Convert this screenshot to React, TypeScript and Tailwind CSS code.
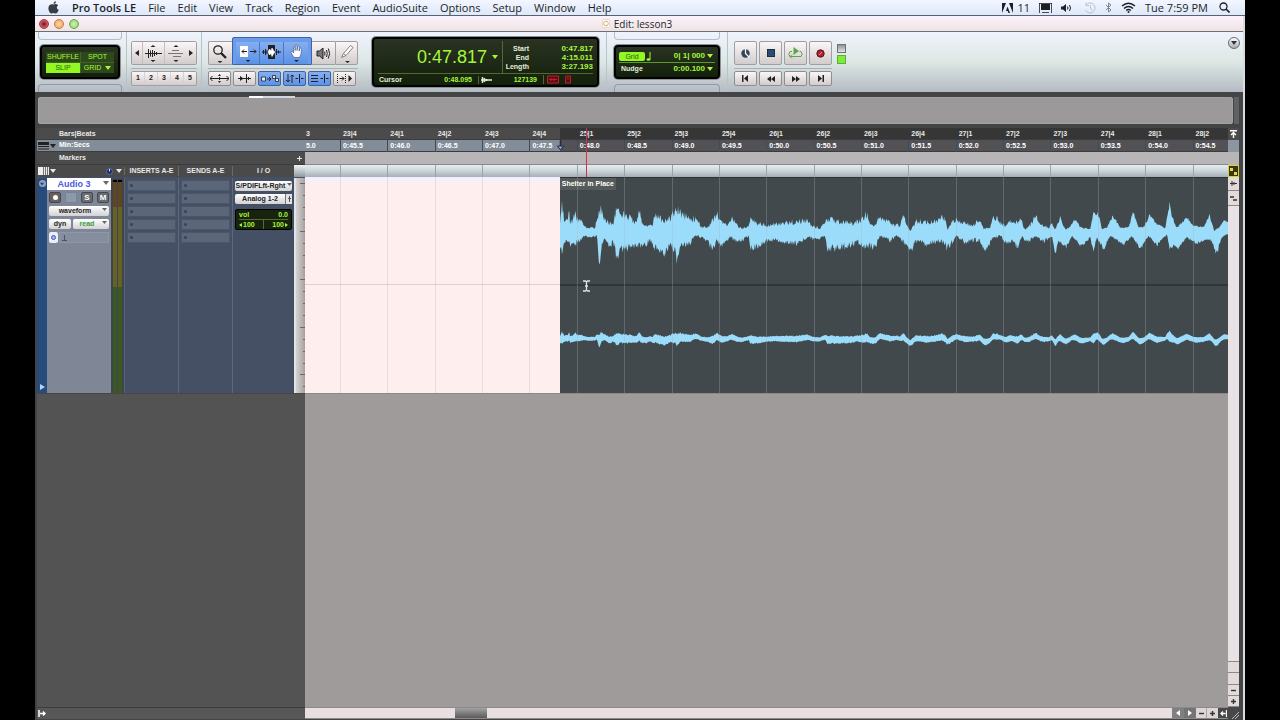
import { type ReactNode } from 'react'
import clsx from 'clsx'

type Point = [number, number]

// envelope of the clip: x and y in canvas units, three units per pixel
const UPPER: Point[] = [
    [30, 300], [36, 250], [43, 295], [55, 295], [57, 248], [60, 300], [70, 290], [76, 265], [82, 290], [95, 300],
    [110, 320], [135, 318], [150, 255], [158, 275], [175, 305], [190, 300], [197, 270], [204, 252], [215, 275],
    [235, 285], [258, 300], [268, 260], [275, 300], [290, 312], [308, 308], [315, 272], [330, 288], [350, 295],
    [365, 285], [376, 250], [385, 265], [400, 275], [425, 290], [440, 285], [455, 318], [475, 315], [490, 290],
    [503, 275], [518, 305], [530, 308], [548, 290], [560, 310], [575, 322], [595, 315], [601, 290], [620, 305],
    [650, 310], [690, 305], [720, 300], [740, 300], [770, 292], [785, 315], [810, 320], [835, 288], [870, 298],
    [910, 305], [940, 290], [950, 268], [960, 310], [975, 312], [990, 280], [1005, 295], [1030, 308], [1050, 310],
    [1060, 270], [1070, 310], [1080, 330], [1100, 295], [1125, 300], [1150, 300], [1175, 280], [1185, 290],
    [1192, 325], [1215, 290], [1235, 300], [1260, 310], [1275, 310], [1288, 285], [1300, 320], [1320, 320],
    [1330, 278], [1345, 295], [1365, 315], [1380, 295], [1392, 305], [1410, 290], [1425, 325], [1440, 310],
    [1457, 280], [1470, 305], [1495, 320], [1505, 308], [1515, 325], [1530, 290], [1545, 325], [1560, 318],
    [1575, 292], [1590, 318], [1620, 325], [1630, 275], [1645, 280], [1655, 325], [1670, 320], [1688, 285],
    [1710, 320], [1735, 318], [1750, 270], [1765, 318], [1780, 318], [1798, 285], [1820, 310], [1845, 322],
    [1858, 250], [1870, 300], [1880, 320], [1910, 290], [1930, 315], [1960, 318], [1978, 285], [1992, 330],
    [2010, 315], [2023, 295], [2035, 305],
]

const LOWER: Point[] = [
    [30, 380], [36, 405], [45, 365], [70, 378], [90, 360], [105, 345], [120, 350], [140, 345], [148, 436],
    [155, 370], [165, 360], [180, 382], [190, 365], [202, 425], [212, 390], [235, 385], [255, 375], [285, 378],
    [300, 358], [315, 390], [345, 400], [365, 375], [380, 420], [390, 380], [420, 375], [432, 345], [455, 350],
    [475, 365], [488, 392], [500, 362], [515, 375], [540, 350], [560, 362], [575, 360], [597, 345], [600, 388],
    [620, 380], [650, 362], [675, 358], [705, 365], [740, 370], [775, 350], [800, 360], [825, 345], [833, 395],
    [860, 385], [895, 378], [920, 365], [945, 380], [975, 382], [990, 345], [1020, 362], [1040, 345], [1065, 375],
    [1080, 403], [1095, 365], [1130, 375], [1160, 365], [1175, 360], [1192, 388], [1210, 360], [1220, 345],
    [1245, 370], [1270, 360], [1290, 360], [1308, 397], [1325, 355], [1350, 345], [1370, 370], [1385, 360],
    [1402, 390], [1415, 350], [1435, 365], [1455, 345], [1480, 365], [1495, 355], [1505, 345], [1516, 398],
    [1525, 360], [1548, 380], [1565, 345], [1595, 375], [1620, 350], [1630, 388], [1640, 350], [1660, 385],
    [1680, 345], [1720, 370], [1745, 345], [1770, 385], [1795, 345], [1820, 372], [1850, 340], [1858, 385],
    [1870, 370], [1882, 382], [1910, 350], [1940, 368], [1965, 355], [1985, 360], [1998, 400], [2015, 350],
    [2025, 342], [2035, 340],
]

const noise = (n: number) => {
    const v = Math.sin(n * 127.1) * 43758.5453
    return v - Math.floor(v)
}

const sample = (points: Point[], x: number) => {
    const i = Math.max(1, points.findIndex((p) => p[0] >= x))
    const [x0, y0] = points[i - 1]
    const [x1, y1] = points[i]
    return y0 + ((y1 - y0) * (x - x0)) / (x1 - x0)
}

// sway moves both edges together, which turns a thin wave into a ribbon
const wavePath = (center: number, scale: number, pad: number, sway: number) => {
    const top: string[] = []
    const bottom: string[] = []
    for (let x = 30; x <= 2034; x += 2) {
        const up = sample(UPPER, x) - 333
        const down = sample(LOWER, x) - 333
        const shift = (up + down) * sway - pad
        const ragged = x < 1500 ? 0.5 : 0.3
        const y0 = center + up * scale * (1.14 - noise(x) * ragged) + shift
        const y1 = center + down * scale * (1.14 - noise(x + 7) * ragged) + shift + pad * 2
        top.push(`${x} ${y0.toFixed(1)}`)
        bottom.unshift(`${x} ${y1.toFixed(1)}`)
    }
    return `M${top.join('L')}L${bottom.join('L')}Z`
}

const LEFT_WAVE = wavePath(333, 1, 0, 0)
const RIGHT_WAVE = wavePath(653, 0.2, 3, 0.12)

const MENUS = ['File', 'Edit', 'View', 'Track', 'Region', 'Event', 'AudioSuite', 'Options', 'Setup', 'Window', 'Help']

const BARS = [
    '3', '23|4', '24|1', '24|2', '24|3', '24|4', '25|1', '25|2', '25|3', '25|4',
    '26|1', '26|2', '26|3', '26|4', '27|1', '27|2', '27|3', '27|4', '28|1', '28|2',
]

const SECS = [
    '5.0', '0:45.5', '0:46.0', '0:46.5', '0:47.0', '0:47.5', '0:48.0', '0:48.5', '0:49.0', '0:49.5',
    '0:50.0', '0:50.5', '0:51.0', '0:51.5', '0:52.0', '0:52.5', '0:53.0', '0:53.5', '0:54.0', '0:54.5',
]

const TIME_GRID = 'grid grid-cols-[360fr_repeat(18,474fr)_345fr]'

const Icon = ({ w, h, className, children }: { w: number; h: number; className?: string; children: ReactNode }) => (
    <svg
        width={w}
        height={h}
        viewBox={`0 0 ${w} ${h}`}
        fill="none"
        stroke="currentColor"
        aria-hidden="true"
        className={clsx('shrink-0', className)}
    >
        {children}
    </svg>
)

const Caret = ({ className }: { className?: string }) => (
    <Icon w={6} h={4} className={className}>
        <path d="M0 0H6L3 4Z" fill="currentColor" stroke="none" />
    </Icon>
)

const Tool = ({ label, active, className, children }: { label: string; active?: boolean; className?: string; children: ReactNode }) => (
    <button
        type="button"
        aria-label={label}
        className={clsx(
            'flex items-center justify-center text-[#222]',
            active ? 'bg-linear-to-b from-[#86aef0] to-[#5b92e6]' : 'bg-linear-to-b from-[#fbf5f6] to-[#d3cccd]',
            className,
        )}
    >
        {children}
    </button>
)

const SmallTool = ({ label, active, children }: { label: string; active?: boolean; children: ReactNode }) => (
    <Tool
        label={label}
        active={active}
        className={clsx('h-[15px] w-[23px] rounded-xs border', active ? 'border-[#3f64a6]' : 'border-[#8f8c90]')}
    >
        {children}
    </Tool>
)

const Slots = ({ name }: { name: string }) => (
    <div className="flex w-[54px] flex-col gap-[2px] border-r border-[#5c6880] px-[2px] pt-[2px]">
        {[1, 2, 3, 4, 5].map((n) => (
            <button
                key={n}
                type="button"
                aria-label={`${name} ${n}`}
                className="flex h-[11px] items-center border border-[#4c566a] bg-[#5b6679] pl-[2px]"
            >
                <span className="size-[3px] rounded-full bg-[#3a4252]" />
            </button>
        ))}
    </div>
)

type SelectProps = { label: string; value: string; color?: string; className?: string; wrap?: string; caret?: string }

const Select = ({ label, value, color = 'text-[#222]', className, wrap, caret = 'right-[2px]' }: SelectProps) => (
    <span className={clsx('relative block', wrap)}>
        <select
            aria-label={label}
            className={clsx(
                'block h-[10px] w-full appearance-none rounded-xs bg-linear-to-b from-white to-[#d2d2d6] text-center text-[7px] leading-[10px] font-bold',
                color,
                className,
            )}
        >
            <option>{value}</option>
        </select>
        <Icon w={5} h={3} className={clsx('pointer-events-none absolute top-[2px] text-[#666]', caret)}>
            <path d="M0 0H5L2.5 3Z" fill="currentColor" stroke="none" />
        </Icon>
    </span>
)

const Lcd = ({ className, children }: { className?: string; children: ReactNode }) => (
    <div
        className={clsx(
            'rounded-sm border-2 border-black bg-linear-to-b from-[#2b3323] to-[#12200b] font-bold text-[#a6f738] ring-1 ring-[#8c9097]',
            className,
        )}
    >
        {children}
    </div>
)

const PanelEdges = ({ className, children }: { className?: string; children: ReactNode }) => (
    <div className={clsx('flex flex-col justify-between', className)}>
        <div className="h-[8px] rounded-b-sm border border-t-0 border-[#b3bec9]" />
        {children}
        <div className="h-[8px] rounded-t-sm border border-b-0 border-[#8f9aa5]" />
    </div>
)

const MenuBar = () => (
    <header className="flex h-4 shrink-0 items-center border-b border-[#59606e] bg-linear-to-b from-[#f3f6ff] to-[#dde8fa] pl-[13px] font-['Open_Sans','Noto_Sans',sans-serif] text-[11px] leading-[14px] text-[#1d1f24]">
        <Icon w={11} h={13} className="mr-[13px] text-[#3a3d45]">
            <path
                d="M5.6 3.6C6.8 2.8 8.9 2.7 10.1 4.4 8.2 5.5 8.4 8 10.7 9 10 10.9 8.7 12.6 7.6 12.5 6.6 12.3 6.3 11.9 5.5 11.9 4.6 11.9 4.2 12.5 3.4 12.5 1.9 12.5.4 9.7.4 7.3.4 4.3 2.7 2.7 5.6 3.6ZM5.6 3C5.5 1.5 6.6.3 8 .2 8.1 1.7 7 2.9 5.6 3Z"
                fill="currentColor"
                stroke="none"
            />
        </Icon>
        <nav aria-label="Menu" className="flex gap-[12px]">
            <button type="button" className="font-semibold">Pro Tools LE</button>
            {MENUS.map((m) => (
                <button key={m} type="button">{m}</button>
            ))}
        </nav>
        <div className="ml-auto flex items-center gap-[9px] pr-[15px]">
            <span className="flex items-center gap-1">
                <Icon w={11} h={10}>
                    <path d="M0 0H4L0 10ZM7 0H11V10ZM5.5 3.5L8 10H6.5L5.7 8H4Z" fill="currentColor" stroke="none" />
                </Icon>
                11
            </span>
            <Icon w={13} h={10}>
                <rect x="2.5" y="1.5" width="8" height="5" fill="currentColor" />
                <path d="M.5 0V10M12.5 0V10M0 .5H13M3 9.5H10" strokeWidth=".8" />
            </Icon>
            <Icon w={11} h={10}>
                <path d="M0 3.5H2L5 1V9L2 6.5H0Z" fill="currentColor" stroke="none" />
                <path d="M6.5 3.5Q7.5 5 6.5 6.5M8.5 2Q10.5 5 8.5 8" />
            </Icon>
            <Icon w={12} h={12} className="ml-[3px] text-[#b9c1d3]">
                <path d="M2 3A5 5 0 1 1 1.5 8M2 .5V3.5H5M6.5 3V6.5L8.5 8" />
            </Icon>
            <Icon w={7} h={11} className="text-[#7d8494]">
                <path d="M1 3L6 8 3.5 10V1L6 3 1 8" />
            </Icon>
            <Icon w={15} h={11}>
                <path d="M1 4Q7.5-1.5 14 4M3 6.5Q7.5 2.5 12 6.5M5.2 8.5Q7.5 6.5 9.8 8.5" strokeWidth="1.5" />
                <circle cx="7.5" cy="10" r="1" fill="currentColor" stroke="none" />
            </Icon>
            <span>Tue 7:59 PM</span>
            <Icon w={11} h={11} className="ml-[2px]">
                <circle cx="4.5" cy="4.5" r="3.5" strokeWidth="1.3" />
                <path d="M7 7L10.5 10.5" strokeWidth="1.6" />
            </Icon>
        </div>
    </header>
)

const TitleBar = () => (
    <div className="flex h-4 shrink-0 items-center border-b border-[#6d6f78] bg-linear-to-b from-[#faf3fb] to-[#efe3e3] pl-[4px]">
        <div className="flex w-0 flex-none gap-[5px]">
            <button type="button" aria-label="Close" className="size-[10px] shrink-0 rounded-full border border-[#a83545] bg-radial from-[#7c1020] to-[#f0848c]" />
            <button type="button" aria-label="Minimize" className="size-[10px] shrink-0 rounded-full border border-[#c57a45] bg-radial from-[#ffd9a0] to-[#f29a55]" />
            <button type="button" aria-label="Zoom" className="size-[10px] shrink-0 rounded-full border border-[#6aa552] bg-radial from-[#d3f5b4] to-[#86cc68]" />
        </div>
        <h1 className="flex flex-1 items-center justify-center gap-1 pr-[8px] font-['Open_Sans','Noto_Sans',sans-serif] text-[10px] leading-[14px] text-[#26262b]">
            <Icon w={8} h={9} className="text-[#d6ad69]">
                <path d="M.5.5H7.5V8.5H.5Z" fill="#fff" stroke="#e3dcd6" />
                <circle cx="4" cy="4.5" r="2.3" />
            </Icon>
            Edit: lesson3
        </h1>
    </div>
)

const EditModes = () => (
    <PanelEdges className="mr-[4px] ml-[3px] w-[84px]">
        <Lcd className="mx-[2px] h-[34px] p-[4px] pt-[5px] text-[7px] font-normal text-[#8fca3c]">
            <div className="grid h-full grid-cols-[34px_1fr] grid-rows-2 gap-px bg-[#44632a]">
                <button type="button" className="bg-[#2d491b]">SHUFFLE</button>
                <button type="button" className="bg-[#2d491b]">SPOT</button>
                <button type="button" className="bg-[#92f722] text-[#2d5a10]">SLIP</button>
                <button type="button" className="flex items-center justify-center gap-1 bg-[#2d491b]">
                    GRID
                    <Caret />
                </button>
            </div>
        </Lcd>
    </PanelEdges>
)

const ZoomTools = () => (
    <div className="flex flex-col border-x border-[#b8c2cb] px-[4px] pt-[9px]">
        <div className="flex h-[24px] w-[66px] overflow-hidden rounded-xs border border-[#a09ea3]">
            <Tool label="Zoom out" className="w-[10px]">
                <Icon w={4} h={6}><path d="M4 0V6L0 3Z" fill="currentColor" stroke="none" /></Icon>
            </Tool>
            <Tool label="Zoom audio" className="flex-1 border-l border-[#c4bfc2]">
                <Icon w={17} h={17}>
                    <path d="M0 8.5H17M3.5 4V13M5.5 5.5V11.5M7.5 5V12M9.5 6V11M11.5 7V10" />
                    <path d="M5.5 2L8 0 10.5 2ZM5.5 15L8 17 10.5 15Z" fill="currentColor" stroke="none" />
                </Icon>
            </Tool>
            <Tool label="Zoom MIDI" className="flex-1 border-l border-[#c4bfc2]">
                <Icon w={16} h={17} className="text-[#777]">
                    <path d="M4 5.5H11M0 8.5H9M8 8.5H15M5 11.5H13" />
                    <path d="M5.5 2L8 0 10.5 2ZM5.5 15L8 17 10.5 15Z" fill="#222" stroke="none" />
                </Icon>
            </Tool>
            <Tool label="Zoom in" className="w-[10px]">
                <Icon w={4} h={6}><path d="M0 0V6L4 3Z" fill="currentColor" stroke="none" /></Icon>
            </Tool>
        </div>
        <div className="my-[2px] h-[2px] border-b border-[#aab0b8]" />
        <div className="flex h-[15px] w-[66px] overflow-hidden rounded-xs border border-[#a09ea3]">
            {[1, 2, 3, 4, 5].map((n) => (
                <Tool key={n} label={`Zoom preset ${n}`} className="flex-1 border-r border-[#d5d0d2] text-[7px] font-bold last:border-r-0">
                    {n}
                </Tool>
            ))}
        </div>
    </div>
)

const EditTools = () => (
    <div className="flex flex-col pt-[5px] pl-[6px]">
        <div className="flex items-end">
            <Tool label="Zoomer" className="h-[24px] w-[24px] rounded-l-xs border border-r-0 border-[#a09ea3]">
                <Icon w={17} h={19}>
                    <circle cx="6" cy="6" r="4.2" strokeWidth="1.3" />
                    <path d="M9 9L14 14" strokeWidth="2.4" />
                    <path d="M5.5 17H10.5L8 19Z" fill="currentColor" stroke="none" />
                </Icon>
            </Tool>
            <div className="flex h-[28px] items-end rounded-t-xs border border-[#3f64a6] bg-[#6b9cec] px-[3px]">
                <Tool label="Trim" active className="h-[22px] w-[24px] border-r border-[#4a76c4]">
                    <Icon w={18} h={18}>
                        <rect x="1" y="2" width="8" height="11" fill="#fff" stroke="none" />
                        <path d="M3 7.5H8M5 5.5L3 7.5 5 9.5M11 7.5H17M15 5.5L17 7.5 15 9.5" />
                        <path d="M6.5 16H11.5L9 18Z" fill="currentColor" stroke="none" />
                    </Icon>
                </Tool>
                <Tool label="Selector" active className="h-[22px] w-[24px] border-r border-[#4a76c4]">
                    <Icon w={19} h={18}>
                        <rect x="6" y="1" width="7" height="14" fill="#222" stroke="none" />
                        <path d="M0 8H19M1.5 6V10M3.5 5V11M5 6V10M14.5 5V11M16.5 6.5V9.5" />
                        <path d="M6 8L7.5 5 9 7 10 4 11.5 6.5 13 8 11.5 10 10 12.5 9 9.5 7.5 11Z" fill="#fff" stroke="#fff" strokeWidth=".6" />
                    </Icon>
                </Tool>
                <Tool label="Grabber" active className="h-[22px] w-[24px]">
                    <Icon w={13} h={18}>
                        <path
                            d="M4 13.5L.8 8.4Q.8 7 2.2 7.6L3.6 9V3Q4.6 1.8 5.2 3V6.5 1.5Q6.4.4 7 1.6V6.5L7.6 2.2Q8.8 1.4 9.2 2.6V7L9.8 4Q11.2 3.4 11.4 4.8 11.6 10 9.6 13.5Z"
                            fill="#fff"
                            stroke="#44608f"
                            strokeWidth=".7"
                        />
                        <path d="M4 16H9L6.5 18Z" fill="currentColor" stroke="none" />
                    </Icon>
                </Tool>
            </div>
            <Tool label="Scrubber" className="h-[24px] w-[23px] border-y border-[#a09ea3]">
                <Icon w={15} h={13}>
                    <path d="M1 4H3.5L7 1V12L3.5 9H1Z" fill="#777" />
                    <path d="M8.8 4.5V8.5M10.5 3Q12 6.5 10.5 10M12.3 1.5Q15 6.5 12.3 11.5" />
                </Icon>
            </Tool>
            <Tool label="Pencil" className="h-[24px] w-[23px] rounded-r-xs border border-[#a09ea3]">
                <Icon w={14} h={19}>
                    <path d="M1.5 13.5L3.5 9.5 10.5 1.5 13 3.5 6 11.5ZM3.5 9.5L6 11.5" strokeWidth=".8" fill="#fff" stroke="#666" />
                    <path d="M5 17H10L7.5 19Z" fill="currentColor" stroke="none" />
                </Icon>
            </Tool>
        </div>
        <div className="my-[2px] h-[2px] border-b border-[#aab0b8]" />
        <div className="flex gap-[2px]">
            <SmallTool label="Zoom toggle">
                <Icon w={19} h={9}>
                    <path d="M0 4.5H19M2.5 2L0 4.5 2.5 7M16.5 2L19 4.5 16.5 7M9.5 3V6" />
                    <path d="M8 2L9.5 0 11 2ZM8 7L9.5 9 11 7Z" fill="currentColor" stroke="none" />
                </Icon>
            </SmallTool>
            <SmallTool label="Tab to transients">
                <Icon w={15} h={9}>
                    <path d="M1 4.5H14M9.5 0V9M11.5 3V6" />
                    <path d="M3 2L6.5 4.5 3 7Z" fill="currentColor" stroke="none" />
                </Icon>
            </SmallTool>
            <SmallTool label="Mirrored MIDI editing" active>
                <Icon w={18} h={7}>
                    <path d="M.5 2H4.5V6H.5ZM14.5 3.5H17.5V6.5H14.5ZM11.5.5H14.5V3.5H11.5Z" fill="#dfe9fb" strokeWidth=".8" />
                    <path d="M6 4H10M8 2L10 4 8 6" />
                </Icon>
            </SmallTool>
            <SmallTool label="Automation follows edit" active>
                <Icon w={18} h={9}>
                    <path d="M2 0V8M0 6L2 8 4 6M6 9V1M4.5 2.5L6 1 8 2.5M13.5 0V9M9.5 4.5H12M15 4.5H17.5" />
                </Icon>
            </SmallTool>
            <SmallTool label="Link timeline and edit selection" active>
                <Icon w={18} h={9}>
                    <path d="M0 1.5H7M0 4.5H7M0 7.5H7M13.5 0V9M9.5 4.5H12M15 4.5H17.5" />
                </Icon>
            </SmallTool>
            <SmallTool label="Insertion follows playback">
                <Icon w={15} h={9}>
                    <path d="M.5 0V9M8.5 0V9" strokeDasharray="1 1" />
                    <path d="M2.5 4.5H7M5 2.5L7 4.5 5 6.5" />
                    <path d="M11.5 1V8L15 4.5Z" fill="currentColor" stroke="none" />
                </Icon>
            </SmallTool>
        </div>
    </div>
)

const Counter = () => (
    <Lcd className="mt-[5px] ml-[14px] flex h-[50px] w-[227px] flex-col px-[4px] pt-[2px] text-[8px]">
        <div className="flex h-[32px]">
            <div className="flex flex-1 items-center justify-end gap-[5px] pr-[4px]">
                <span className="text-[18px] leading-[18px] font-normal">0:47.817</span>
                <Caret />
            </div>
            <dl className="grid w-[91px] grid-cols-[26px_1fr] content-center border-l border-[#55682f] text-right leading-[9px]">
                <dt className="text-[7px] text-[#e6eedb]">Start</dt>
                <dd>0:47.817</dd>
                <dt className="text-[7px] text-[#e6eedb]">End</dt>
                <dd>4:15.011</dd>
                <dt className="text-[7px] text-[#e6eedb]">Length</dt>
                <dd>3:27.193</dd>
            </dl>
        </div>
        <div className="flex flex-1 items-center border-t border-[#55682f] text-[7px] leading-[10px]">
            <span className="w-[60px] pl-px text-[#e6eedb]">Cursor</span>
            <span className="w-[34px] text-right">0:48.095</span>
            <Icon w={14} h={8} className="ml-[6px] text-[#e6eedb]">
                <path d="M.5 0V8" stroke="#55682f" />
                <path d="M3 4H14M4.5 1V7M6.5 2V6M8.5 3V5" strokeWidth="1.5" />
            </Icon>
            <span className="w-[45px] text-right">127139</span>
            <Icon w={30} h={9} className="ml-[6px] text-[#c01f2c]">
                <path d="M.5 0V9" stroke="#55682f" />
                <path d="M4.5 1H15.5V8H4.5ZM6 4.5H14M8 3V6M11 3V6M23 1H27.5V8H22.5V3.5ZM25 2.5V5" fill="#5a0c12" />
            </Icon>
        </div>
    </Lcd>
)

const GridNudge = () => (
    <PanelEdges className="w-[106px]">
        <Lcd className="flex h-[34px] flex-col p-[3px] text-[8px] leading-[12px]">
            <div className="flex h-[14px] items-center border-b border-[#5b9a26]">
                <button type="button" className="h-[9px] w-[26px] rounded-xs bg-[#92f722] text-[7px] leading-[9px] font-normal text-[#2d5a10]">
                    Grid
                </button>
                <Icon w={5} h={9} className="ml-px">
                    <path d="M4 0V7" />
                    <ellipse cx="2.5" cy="7.5" rx="2" ry="1.3" fill="currentColor" stroke="none" />
                </Icon>
                <span className="ml-auto">0| 1| 000</span>
                <Caret className="mx-[2px]" />
            </div>
            <div className="flex flex-1 items-center">
                <span className="pl-[2px] text-[7px] text-[#e6eedb]">Nudge</span>
                <span className="ml-auto">0:00.100</span>
                <Caret className="mx-[2px]" />
            </div>
        </Lcd>
    </PanelEdges>
)

const bigKey = 'h-[24px] w-[23px] rounded-xs border border-[#a09ea3]'

const Transport = () => (
    <div className="ml-[7px] flex gap-[5px] border-l border-[#b8c2cb] pt-[9px] pl-[6px]">
        <div className="flex flex-col">
            <div className="flex gap-[2px]">
                <Tool label="Online" className={bigKey}>
                    <Icon w={9} h={9}>
                        <circle cx="4.5" cy="4.5" r="4.2" fill="#33465a" stroke="none" />
                        <path d="M4.5 0V4.5L8 8" stroke="#fff" strokeWidth="1.2" />
                    </Icon>
                </Tool>
                <Tool label="Stop" className={bigKey}>
                    <span className="size-[8px] border border-[#14304d] bg-[#2f4d70]" />
                </Tool>
                <Tool label="Play" className={bigKey}>
                    <Icon w={17} h={12} className="text-[#5aa84b]">
                        <path d="M5 4.5H3Q.5 7.5 3 9.5H14Q16.5 7 14 4.5H12.5M5 7.5L3 9.5 5 11.5" />
                        <path d="M6.5 0V8L12 4Z" fill="currentColor" stroke="none" />
                    </Icon>
                </Tool>
                <Tool label="Record" className={bigKey}>
                    <Icon w={9} h={9}>
                        <circle cx="4.5" cy="4.5" r="3.7" fill="#b81f31" stroke="#4a1820" />
                        <path d="M3 6L6 3" stroke="#e88b95" />
                    </Icon>
                </Tool>
            </div>
            <div className="my-[2px] h-[2px] border-b border-[#aab0b8]" />
            <div className="flex gap-[2px]">
                <SmallTool label="Return to zero">
                    <Icon w={7} h={7}><path d="M0 0H1.5V7H0ZM6 0V7L2 3.5Z" fill="currentColor" stroke="none" /></Icon>
                </SmallTool>
                <SmallTool label="Rewind">
                    <Icon w={8} h={6}><path d="M4 0V6L0 3ZM8 0V6L4 3Z" fill="currentColor" stroke="none" /></Icon>
                </SmallTool>
                <SmallTool label="Fast forward">
                    <Icon w={8} h={6}><path d="M0 0V6L4 3ZM4 0V6L8 3Z" fill="currentColor" stroke="none" /></Icon>
                </SmallTool>
                <SmallTool label="Go to end">
                    <Icon w={7} h={7}><path d="M5.5 0H7V7H5.5ZM1 0V7L5 3.5Z" fill="currentColor" stroke="none" /></Icon>
                </SmallTool>
            </div>
        </div>
        <div className="flex flex-col gap-[2px] pt-[3px]">
            <span className="size-[9px] border border-[#6e7278] bg-linear-to-b from-[#8f939a] to-[#e3e3e6]" />
            <span className="size-[9px] border border-[#5fae36] bg-[#7dec3e]" />
        </div>
    </div>
)

const Toolbar = () => (
    <div className="flex h-[60px] shrink-0 bg-linear-to-b from-[#eff3fd] via-[#dde7e4] via-50% to-[#b4bbc3]">
        <EditModes />
        <ZoomTools />
        <EditTools />
        <Counter />
        <div className="mr-[7px] ml-[7px] w-px bg-[#b8c2cb]" />
        <GridNudge />
        <Transport />
        <button
            type="button"
            aria-label="Edit window options"
            className="mt-[5px] mr-[3px] ml-auto flex size-[12px] items-center justify-center rounded-full border border-[#66696e] bg-linear-to-b from-white to-[#a9acb2]"
        >
            <Caret className="text-[#333]" />
        </button>
    </div>
)

const TrackControls = () => (
    <div className="flex w-[64px] flex-col bg-[#7f8797]">
        <div className="relative h-[12px] bg-white">
            <button type="button" className="w-[54px] text-center text-[9px] leading-[12px] font-bold text-[#4a5be0]">Audio 3</button>
            <Caret className="absolute top-[3px] right-[2px] text-[#666]" />
        </div>
        <div className="flex flex-col gap-[3px] px-[2px] pt-[2px]">
            <div className="flex justify-between text-[8px] leading-[10px] font-bold text-white">
                <button type="button" aria-label="Record enable" className="flex h-[11px] w-[12px] items-center justify-center rounded-xs border border-[#44484f] bg-[#6b5d5d]">
                    <span className="size-[5px] rounded-full bg-white" />
                </button>
                <span className="h-[11px] w-[12px] border border-[#768296] bg-[#8b99ab]" />
                <button type="button" className="h-[11px] w-[12px] rounded-xs border border-[#44484f] bg-[#686c74]">S</button>
                <button type="button" className="h-[11px] w-[12px] rounded-xs border border-[#44484f] bg-[#686c74]">M</button>
            </div>
            <Select label="Track view" value="waveform" className="pr-2" />
            <div className="flex gap-[2px]">
                <button type="button" className="h-[10px] w-[22px] rounded-xs bg-linear-to-b from-white to-[#d2d2d6] text-[7px] leading-[10px] font-bold text-[#222]">
                    dyn
                </button>
                <Select label="Automation mode" value="read" wrap="flex-1" color="text-[#3c9a3c]" className="pr-2" />
            </div>
            <div className="flex gap-px">
                <button type="button" aria-label="Timebase" className="flex h-[11px] w-[9px] items-center justify-center rounded-xs bg-[#eceef8]">
                    <span className="size-[5px] rounded-full border border-[#4a55c0] bg-[#a9b0ec]" />
                </button>
                <div className="flex flex-1 items-center border border-[#8f98a8] bg-[#858e9e] pl-[2px]">
                    <Icon w={5} h={6} className="text-[#4c5361]"><path d="M2.5 0V5M0 5.5H5" /></Icon>
                </div>
            </div>
        </div>
    </div>
)

const Track = () => (
    <div className="flex h-[216px] bg-[#465064] pt-px">
        <div className="flex w-[10px] flex-col items-center justify-between bg-[#264b7c] pt-[2px] pb-[3px]">
            <button type="button" aria-label="Track options" className="flex size-[7px] items-center justify-center rounded-full bg-[#8ea2bd]">
                <Caret className="scale-75 text-[#2c4468]" />
            </button>
            <Icon w={5} h={6} className="text-[#b3d4f5]"><path d="M0 0V6L5 3Z" fill="currentColor" stroke="none" /></Icon>
        </div>
        <TrackControls />
        <div className="flex w-[13px] gap-px bg-[#414450] px-[2px] pt-[2px]">
            {['left', 'right'].map((side) => (
                <div key={side} className="flex flex-1 flex-col">
                    <div className="h-[2px] bg-black" />
                    <div className="h-[25px] bg-[#5d4620]" />
                    <div className="h-[80px] bg-[#656322]" />
                    <div className="flex-1 bg-[#3b5922]" />
                </div>
            ))}
        </div>
        <div className="w-px bg-[#58647a]" />
        <Slots name="Insert" />
        <Slots name="Send" />
        <div className="flex flex-1 flex-col gap-[3px] px-[2px] pt-[3px]">
            <Select label="Input" value="S/PDIFLft-Rght" className="pr-[6px]" caret="right-0" />
            <div className="flex">
                <button type="button" className="h-[10px] flex-1 rounded-l-xs bg-linear-to-b from-white to-[#d2d2d6] text-[7px] leading-[10px] font-bold text-[#222]">
                    Analog 1-2
                </button>
                <button type="button" aria-label="Output window" className="flex w-[7px] items-center justify-center border-l border-[#777] bg-[#e2e2e6] text-[#555]">
                    <Icon w={3} h={6}><path d="M1.5 0V6M0 2.5H3" /></Icon>
                </button>
            </div>
            <div className="mt-[2px] rounded-xs border border-black bg-[#17230f] px-[3px] text-[7px] leading-[9px] font-bold text-[#a6f738]">
                <div className="flex justify-between border-b border-[#50702c]">
                    <span>vol</span>
                    <span>0.0</span>
                </div>
                <div className="flex justify-between">
                    <span className="flex flex-1 items-center gap-px border-r border-[#50702c]">
                        <Icon w={3} h={4}><path d="M3 0V4L0 2Z" fill="currentColor" stroke="none" /></Icon>
                        100
                    </span>
                    <span className="flex flex-1 items-center justify-end gap-px">
                        100
                        <Icon w={3} h={4}><path d="M0 0V4L3 2Z" fill="currentColor" stroke="none" /></Icon>
                    </span>
                </div>
            </div>
        </div>
        <div className="flex w-[11px] flex-col items-end justify-around border-l-2 border-[#dfe6ea] bg-linear-to-r from-[#d6d2d2] to-[#a5a1a1]">
            {Array.from({ length: 18 }, (_, i) => (
                <span key={i} className={clsx('h-px bg-[#6c6868]', i % 4 === 0 ? 'w-[5px]' : 'w-[2px]')} />
            ))}
        </div>
    </div>
)

const TrackList = () => (
    <section aria-label="Tracks" className="flex w-[268px] shrink-0 flex-col text-[7px] font-bold text-[#e8e8e8]">
        <div className="h-[12px] border-b border-[#3c3c3c] bg-[#4b4b4b] pl-[22px] leading-[12px]">Bars|Beats</div>
        <div className="flex h-[12px] items-center border-b border-[#3c3c3c] bg-[#828d99] text-white">
            <Icon w={11} h={8} className="ml-px"><path d="M0 0H11V3H0ZM0 4H11V5H0ZM0 6.5H11V7.5H0Z" fill="#222" stroke="none" /></Icon>
            <Caret className="mr-[3px] ml-px text-[#222]" />
            Min:Secs
        </div>
        <div className="flex h-[13px] items-center justify-between border-b border-[#3c3c3c] bg-[#4b4b4b] pr-[3px] pl-[22px]">
            Markers
            <button type="button" aria-label="Add marker">
                <Icon w={5} h={5}><path d="M2.5 0V5M0 2.5H5" /></Icon>
            </button>
        </div>
        <div className="flex h-[12px] items-center bg-[#4a4a4a]">
            <div className="flex w-[88px] items-center border-r border-[#6a6a6a] pl-px">
                <Icon w={11} h={8}>
                    <path d="M0 0H11V8H0Z" fill="#eee" stroke="none" />
                    <path d="M5.5 0V8M7.5 0V8M9.5 0V8" stroke="#444" strokeWidth=".7" />
                </Icon>
                <Caret className="ml-px" />
                <Icon w={7} h={7} className="ml-auto text-[#5c70b8]">
                    <circle cx="3.5" cy="3.5" r="3" fill="#1f2b58" />
                    <path d="M3.5 1V3.5" stroke="#dde" />
                </Icon>
                <Caret className="mr-[2px] ml-[3px]" />
            </div>
            <div className="w-[54px] border-r border-[#6a6a6a] text-center whitespace-nowrap">INSERTS A-E</div>
            <div className="w-[54px] border-r border-[#6a6a6a] text-center whitespace-nowrap">SENDS A-E</div>
            <div className="flex-1 text-center">I / O</div>
            <div className="h-full w-[11px] bg-linear-to-b from-[#f0f4f6] to-[#8f9aa0]" />
        </div>
        <Track />
        <div className="flex-1 border-t border-[#464646] bg-[#535353]" />
        <div className="flex h-[12px] items-center border-t border-[#3c3c3c] bg-[#575757] pl-px text-white">
            <button type="button" aria-label="Show track list">
                <Icon w={8} h={7}><path d="M1 0V7M2 3.5H7M5 1.5L7 3.5 5 5.5" strokeWidth="1.5" /></Icon>
            </button>
        </div>
    </section>
)

const GridLines = ({ className }: { className: string }) => (
    <div className={clsx('pointer-events-none absolute inset-0', TIME_GRID)}>
        {BARS.map((b) => (
            <span key={b} className={clsx('border-r last:border-r-0', className)} />
        ))}
    </div>
)

const Timeline = () => (
    <section aria-label="Timeline" className="relative flex min-w-0 flex-1 flex-col text-[7px] font-bold text-[#e8e8e8]">
        <div className={clsx(TIME_GRID, 'h-[12px] border-b border-[#3c3c3c] bg-[linear-gradient(90deg,#4b4b4b_27.6%,#363636_27.6%)] leading-[12px]')}>
            {BARS.map((b, i) => (
                <span key={b} className={i ? 'pl-[2px]' : 'pl-px'}>{b}</span>
            ))}
        </div>
        <div className={clsx(TIME_GRID, 'h-[12px] border-b border-[#3c3c3c] bg-[linear-gradient(90deg,#828d99_27.6%,#515156_27.6%)] leading-[12px] text-white')}>
            {SECS.map((s, i) => (
                <span key={s} className={clsx('border-r border-[#444b52] last:border-r-0', i ? 'pl-[2px]' : 'pl-px')}>{s}</span>
            ))}
        </div>
        <div className="h-[13px] border-b border-[#84898c] bg-[#b7b5b6]" />
        <div className="relative h-[12px] bg-linear-to-b from-[#e6edf0] via-[#cbd4d9] to-[#a5aeb3]">
            <GridLines className="border-[#9aa4aa]" />
        </div>
        <div className="relative flex h-[216px]">
            <div className="w-[27.6%] bg-[linear-gradient(#f1f0ff,#feeeee_8px)]">
                <div className="mt-[107px] h-px bg-[#ddd0d0]" />
            </div>
            <div className="relative flex-1 border-t border-[#2b3134] bg-[#41494d]">
                <svg viewBox="30 171 2004 645" preserveAspectRatio="none" className="absolute inset-0 size-full" aria-label="Waveform">
                    <path d="M30 492H2034" stroke="#20272a" strokeWidth="3" />
                    <path d={LEFT_WAVE} fill="#9bdcfa" />
                    <path d={RIGHT_WAVE} fill="#9bdcfa" />
                </svg>
                <span className="relative block w-fit bg-[#545b58] px-[2px] leading-[12px] text-white">Shelter in Place</span>
            </div>
            <GridLines className="border-[#a8b4bb]/30" />
            <Icon w={7} h={12} className="absolute top-[103px] left-[30.1%] text-[#dfe3e6]">
                <path d="M0 1H2.5L3.5 2 4.5 1H7M3.5 2V10M0 11H2.5L3.5 10 4.5 11H7M2 6H5" strokeWidth="1.3" />
            </Icon>
        </div>
        <div className="flex-1 border-t border-[#8d8989] bg-[#a09b9b]" />
        <div className="flex h-[12px] border-y border-[#8d8989] bg-[#e9dfe1]">
            <div className="w-[16.3%]" />
            <div className="w-[32px] bg-linear-to-b from-[#a3a3a3] to-[#5b5b5b]" />
            <div className="ml-auto flex text-[#333]">
                <button type="button" aria-label="Scroll left" className="flex w-[12px] items-center justify-center bg-[#808080] text-white">
                    <Icon w={4} h={6}><path d="M4 0V6L0 3Z" fill="currentColor" stroke="none" /></Icon>
                </button>
                <button type="button" aria-label="Scroll right" className="flex w-[12px] items-center justify-center bg-[#747474] text-white">
                    <Icon w={4} h={6}><path d="M0 0V6L4 3Z" fill="currentColor" stroke="none" /></Icon>
                </button>
                <button type="button" aria-label="Zoom out" className="flex w-[11px] items-center justify-center border-r border-[#aaa] bg-[#ddd5d6]">
                    <Icon w={5} h={5}><path d="M0 2.5H5" strokeWidth="1.4" /></Icon>
                </button>
                <button type="button" aria-label="Zoom in" className="flex w-[11px] items-center justify-center bg-[#ddd5d6]">
                    <Icon w={5} h={5}><path d="M0 2.5H5M2.5 0V5" strokeWidth="1.4" /></Icon>
                </button>
                <button type="button" aria-label="Show regions list" className="flex w-[10px] items-center justify-center bg-[#484848] text-white">
                    <Icon w={7} h={7}><path d="M6.5 0V7M1 3.5H5.5M3 1.5L1 3.5 3 5.5" strokeWidth="1.3" /></Icon>
                </button>
            </div>
        </div>
        <div className="absolute top-0 left-[30.4%] h-[49px] w-px bg-[#d22f54]" />
        <Icon w={7} h={12} className="absolute top-[12px] left-[27.3%] text-[#1e2b4d]">
            <path d="M3.5 0V6" strokeWidth="1.5" />
            <path d="M.5 6H6.5L3.5 10Z" fill="#8fa3d4" />
        </Icon>
    </section>
)

const edgeKey = 'flex items-center justify-center border-b border-[#8d8989] bg-[#e2dadb] text-[#333]'

const EdgeColumn = () => (
    <div className="flex w-[11px] shrink-0 flex-col bg-[#e9e2e5]">
        <div className="flex h-[12px] items-center justify-center bg-[#4b4b4b] text-white">
            <Icon w={7} h={8}><path d="M0 .7H7M3.5 2.5V8M1 5L3.5 2.5 6 5" strokeWidth="1.4" /></Icon>
        </div>
        <div className="h-[12px] bg-[#8c96a2]" />
        <div className="h-[13px] bg-[#b7b5b6]" />
        <button type="button" aria-label="Keyboard focus" className="flex h-[12px] items-center justify-center border border-[#d6cf38] bg-[#3a3512] text-[#e4dc3f]">
            <Icon w={9} h={9}><path d="M1 1H4V4H1ZM5 5H8V8H5Z" fill="currentColor" stroke="none" /></Icon>
        </button>
        <button type="button" aria-label="Audio zoom" className={clsx(edgeKey, 'h-[14px]')}>
            <Icon w={7} h={7}><path d="M0 3.5H7M2 1V6M4 2V5" /></Icon>
        </button>
        <button type="button" aria-label="MIDI zoom" className={clsx(edgeKey, 'h-[15px]')}>
            <Icon w={7} h={5}><path d="M0 1H4M3 4H7" strokeWidth="1.4" /></Icon>
        </button>
        <div className="flex-1" />
        <button type="button" aria-label="Scroll up" className={clsx(edgeKey, 'h-[12px] border-t')} />
        <button type="button" aria-label="Scroll down" className={clsx(edgeKey, 'h-[12px]')} />
        <button type="button" aria-label="Track height down" className={clsx(edgeKey, 'h-[11px]')}>
            <Icon w={5} h={5}><path d="M0 2.5H5" strokeWidth="1.4" /></Icon>
        </button>
        <button type="button" aria-label="Track height up" className={clsx(edgeKey, 'h-[11px]')}>
            <Icon w={5} h={5}><path d="M0 2.5H5M2.5 0V5" strokeWidth="1.4" /></Icon>
        </button>
        <div className="flex h-[12px] items-end justify-end bg-[#484848] text-[#bbb]">
            <Icon w={7} h={7}><path d="M0 7L7 0M3 7L7 3" /></Icon>
        </div>
    </div>
)

const App = () => {
    return (
        <main className="flex h-screen flex-col bg-black px-[35px] font-['Liberation_Sans',Arial,sans-serif] whitespace-nowrap select-none">
            <MenuBar />
            <div className="flex min-h-0 flex-1">
                <div className="flex min-w-0 flex-1 flex-col bg-[#434445]">
                    <TitleBar />
                    <Toolbar />
                    <div className="flex min-h-0 flex-1 flex-col pt-[5px] pr-[4px] pb-px pl-[2px]">
                        <div className="relative mb-[4px] flex h-[27px] shrink-0 gap-px pl-px">
                            <div className="flex-1 rounded-xs border border-[#a3a1a1] bg-[#9b9999]" />
                            <div className="w-[5px] bg-[#5f6162]" />
                            <div className="absolute -top-px left-[212px] flex h-[2px] w-[46px]">
                                <span className="w-[14px] bg-white" />
                                <span className="flex-1 bg-[#cfd8e0]" />
                            </div>
                        </div>
                        <div className="flex min-h-0 flex-1">
                            <TrackList />
                            <Timeline />
                            <EdgeColumn />
                        </div>
                    </div>
                </div>
                <div className="w-[2px] bg-[#d9dde2]" />
            </div>
        </main>
    )
}

export default App
